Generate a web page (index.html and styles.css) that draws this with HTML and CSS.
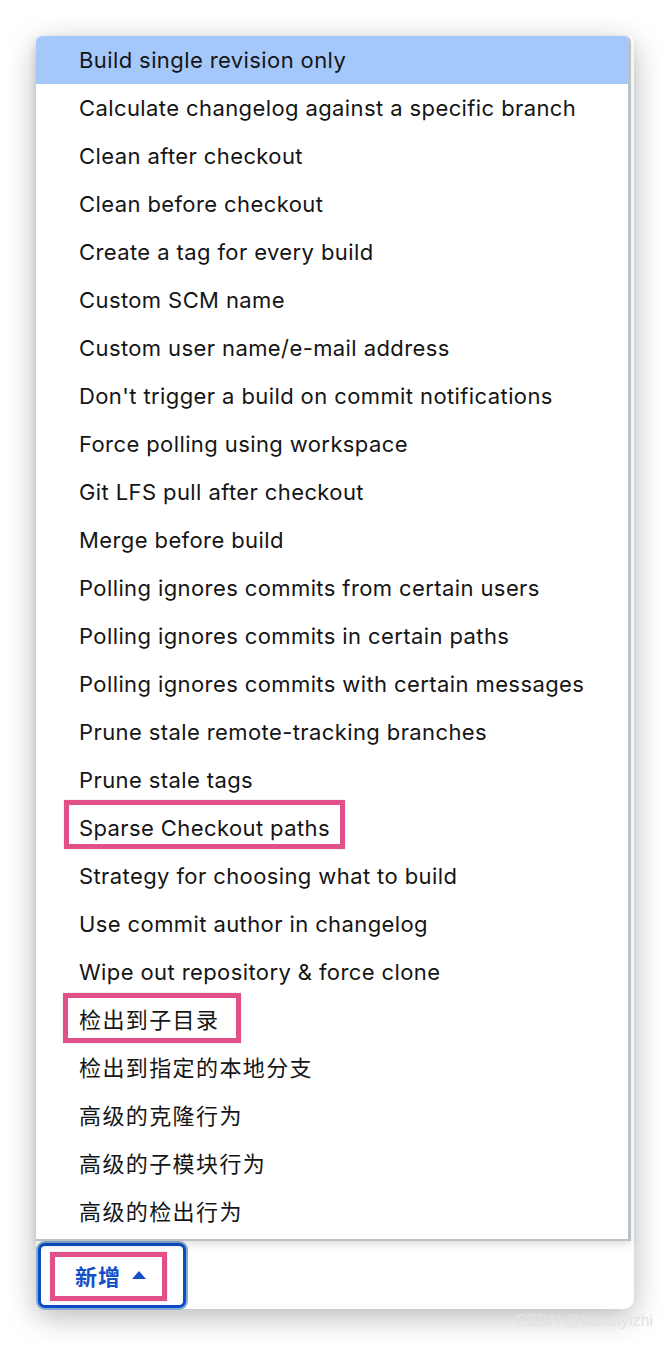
FILE: index.html
```html
<!DOCTYPE html>
<html lang="zh-CN">
<head>
<meta charset="utf-8">
<title>Additional Behaviours</title>
<link rel="stylesheet" href="styles.css">
</head>
<body>
<div class="window">
  <ul class="menu">
    <li class="item active">Build single revision only</li>
    <li class="item">Calculate changelog against a specific branch</li>
    <li class="item">Clean after checkout</li>
    <li class="item">Clean before checkout</li>
    <li class="item">Create a tag for every build</li>
    <li class="item">Custom SCM name</li>
    <li class="item">Custom user name/e-mail address</li>
    <li class="item">Don't trigger a build on commit notifications</li>
    <li class="item">Force polling using workspace</li>
    <li class="item">Git LFS pull after checkout</li>
    <li class="item">Merge before build</li>
    <li class="item">Polling ignores commits from certain users</li>
    <li class="item">Polling ignores commits in certain paths</li>
    <li class="item">Polling ignores commits with certain messages</li>
    <li class="item">Prune stale remote-tracking branches</li>
    <li class="item">Prune stale tags</li>
    <li class="item"><span class="mark mark-en">Sparse Checkout paths</span></li>
    <li class="item">Strategy for choosing what to build</li>
    <li class="item">Use commit author in changelog</li>
    <li class="item">Wipe out repository &amp; force clone</li>
    <li class="item zh"><span class="mark mark-zh">检出到子目录</span></li>
    <li class="item zh">检出到指定的本地分支</li>
    <li class="item zh">高级的克隆行为</li>
    <li class="item zh">高级的子模块行为</li>
    <li class="item zh">高级的检出行为</li>
  </ul>
  <div class="actions">
    <button class="add" type="button"><span class="add-label">新增<span class="caret"></span></span></button>
  </div>
</div>
<div class="watermark">CSDN @liuweiyizhi</div>
</body>
</html>
```

FILE: styles.css
```css
html, body {
  margin: 0;
  padding: 0;
  background: #ffffff;
  overflow: hidden;
}

body {
  width: 670px;
  height: 1346px;
  font-family: Inter, "Noto Sans CJK SC", "Liberation Sans", sans-serif;
}

.window {
  margin: 36px 0 0 36px;
  width: 598px;
  background: #ffffff;
  border-radius: 6px 6px 10px 10px;
  box-shadow: 0 8px 30px rgba(0, 0, 0, 0.28);
}

.menu {
  list-style: none;
  margin: 0;
  padding: 0 0 3px 0;
  width: 592px;
  border-right: 3px solid #b9c2cb;
  border-bottom: 2px solid #b9c2cb;
  border-radius: 6px 6px 0 0;
  background: #ffffff;
  overflow: hidden;
  box-shadow: 0 4px 8px rgba(0, 0, 0, 0.12);
  position: relative;
  z-index: 1;
}

.item {
  height: 48px;
  line-height: 48px;
  padding-left: 43px;
  font-size: 22px;
  letter-spacing: 0.4px;
  color: #151515;
  white-space: nowrap;
}

.item.zh {
  font-family: "Noto Sans CJK SC", sans-serif;
  letter-spacing: 1.4px;
  line-height: 44px;
}

.item.active {
  background: #a5c8fb;
}

.mark {
  position: relative;
  display: inline-block;
}

.mark::before {
  content: "";
  position: absolute;
  border: 5px solid #e2508a;
  box-shadow: 0 0 0 1px #f3f3f3;
}

.mark-en::before {
  top: -4px;
  bottom: 3px;
  left: -15px;
  right: -15px;
}

.mark-zh::before {
  top: -3px;
  bottom: -3px;
  left: -16px;
  right: -22px;
}

.actions {
  height: 68px;
  padding: 2px 0 0 2px;
  box-sizing: border-box;
}

.add {
  display: flex;
  align-items: flex-start;
  justify-content: flex-start;
  width: 148px;
  height: 65px;
  box-sizing: border-box;
  margin: 0;
  padding: 6px 0 0 9px;
  border: 3px solid #0b4cc6;
  border-radius: 7px;
  background: #ffffff;
  box-shadow: 0 0 0 2px #86acd0;
  font-family: "Noto Sans CJK SC", "Liberation Sans", sans-serif;
  cursor: pointer;
}

.add-label {
  display: flex;
  align-items: center;
  gap: 11px;
  width: 117px;
  height: 49px;
  box-sizing: border-box;
  padding: 0 0 3px 20px;
  border: 5px solid #e2508a;
  box-shadow: 0 0 0 1px #f3f3f3;
  font-size: 22px;
  line-height: 1;
  font-weight: 700;
  letter-spacing: 1px;
  color: #1550c9;
}

.caret {
  width: 0;
  height: 0;
  border-left: 7.5px solid transparent;
  border-right: 7.5px solid transparent;
  border-bottom: 8px solid #1550c9;
}

.watermark {
  margin: 3px 0 0 515px;
  white-space: nowrap;
  font-family: "Liberation Sans", Arial, sans-serif;
  font-size: 16px;
  color: #e3e3e3;
}
```
